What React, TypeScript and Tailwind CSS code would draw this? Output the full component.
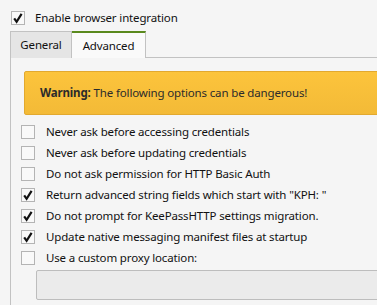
const options = [
  { label: "Never ask before accessing credentials", checked: false },
  { label: "Never ask before updating credentials", checked: false },
  { label: "Do not ask permission for HTTP Basic Auth", checked: false },
  { label: 'Return advanced string fields which start with "KPH: "', checked: true },
  { label: "Do not prompt for KeePassHTTP settings migration.", checked: true },
  { label: "Update native messaging manifest files at startup", checked: true },
  { label: "Use a custom proxy location:", checked: false },
];

const Check = ({ checked }: { checked: boolean }) => (
  <span className="flex h-[14px] w-[14px] shrink-0 items-center justify-center border border-[#b4b4b4] bg-[#f9f9f9]">
    {checked && (
      <svg width="12" height="12" viewBox="0 0 12 12">
        <path d="M2.2 6.4 L4.6 9.8 L9.6 1.8" fill="none" stroke="#111" strokeWidth="2.2" strokeLinejoin="miter" />
      </svg>
    )}
  </span>
);

export default function App() {
  return (
    <div className="h-[305px] w-[377px] overflow-hidden bg-[#f5f5f5] text-[11.5px] tracking-[-0.15px] text-[#111] [font-family:'Noto_Sans',sans-serif]">
      <div className="flex h-[31px] items-start pl-[11px] pt-[11px]">
        <Check checked />
        <span className="ml-[10px] leading-[14px]">Enable browser integration</span>
      </div>

      <div className="ml-[10px] flex h-[27px]">
        <div className="flex w-[62px] items-center justify-center border border-b-0 border-[#c2c2c2] bg-[#e5e5e5]">
          General
        </div>
        <div className="flex w-[74px] items-center justify-center border-r border-[#c2c2c2] border-t-[2px] border-t-[#5a8a1e] bg-[#fafafa]">
          Advanced
        </div>
        <div className="flex-1 border-b border-[#c2c2c2]" />
      </div>

      <div className="ml-[10px] h-[300px] w-[500px] border-l border-[#c2c2c2] pl-[13px] pt-[13px]">
        <div className="flex h-[44px] items-center rounded-[2px] border border-[#e2a92f] bg-gradient-to-b from-[#fcc43c] to-[#f3ba37] pl-[15px] text-[#2b2b2b]">
          <span className="font-bold">Warning:</span>
          <span className="ml-[3px]">The following options can be dangerous!</span>
        </div>

        <div className="-ml-[3px] mt-[10px] flex flex-col gap-[7px]">
          {options.map((o) => (
            <div key={o.label} className="flex items-center">
              <Check checked={o.checked} />
              <span className="ml-[11px] leading-[14px]">{o.label}</span>
            </div>
          ))}
        </div>

        <div className="ml-[12px] mt-[5px] h-[30px] rounded-[2px] border border-[#bdbdbd] bg-[#ebebeb]" />
      </div>
    </div>
  );
}
